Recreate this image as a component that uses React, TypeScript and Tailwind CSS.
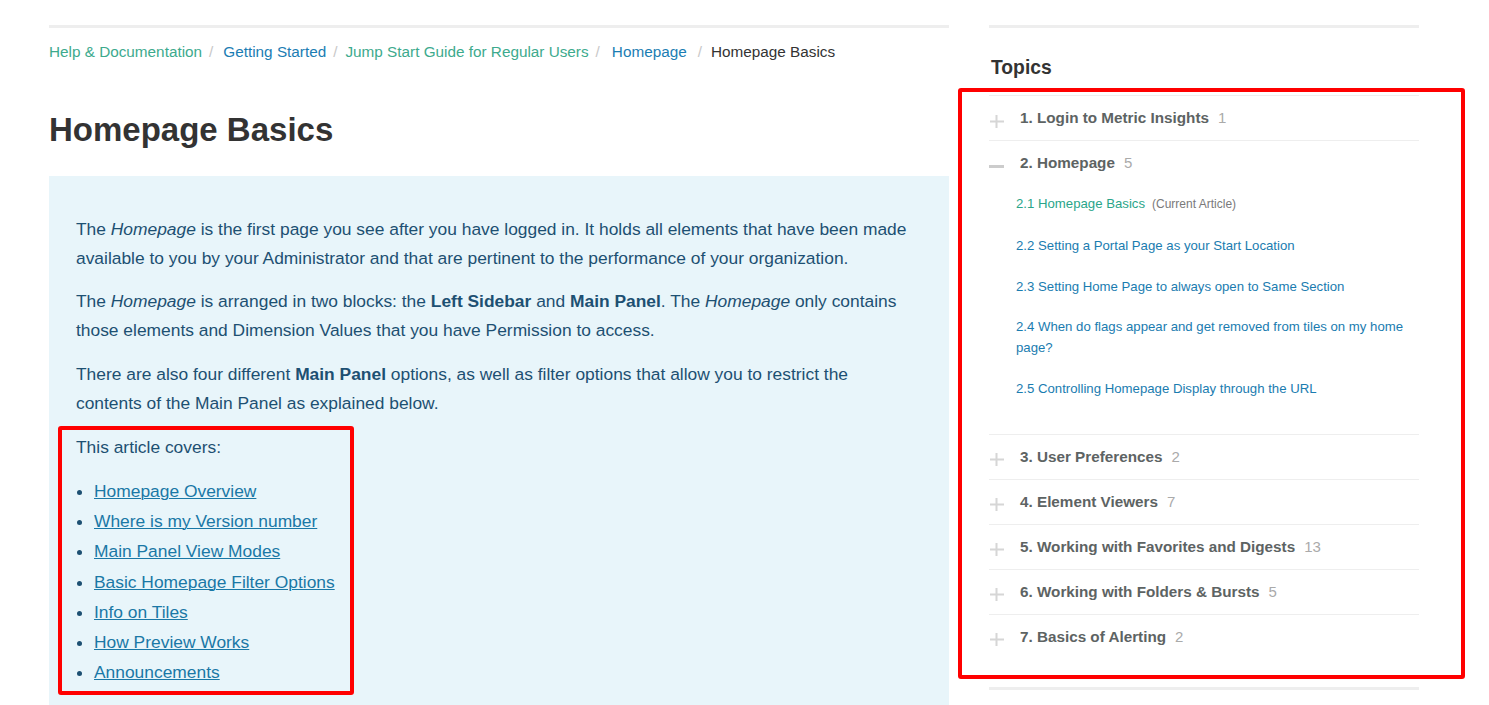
import React from "react";

function Plus() {
  return (
    <svg width="15" height="15" viewBox="0 0 15 15" className="block">
      <path d="M7.5 1v13M1 7.5h14" stroke="#d6d6d6" strokeWidth="2" fill="none" />
    </svg>
  );
}

function Minus() {
  return (
    <svg width="15" height="15" viewBox="0 0 15 15" className="block">
      <rect x="0" y="6" width="15" height="3" fill="#cccccc" />
    </svg>
  );
}

function TopicHeader({ title, count, open }: { title: string; count: number; open?: boolean }) {
  return (
    <div className="flex items-center pt-[11px] pb-[11px] leading-[22px]">
      <span className="mt-[6px] w-[31px] shrink-0">{open ? <Minus /> : <Plus />}</span>
      <span className="text-[15.25px] font-bold text-[#5d6363]">{title}</span>
      <span className="ml-[9px] text-[15px] text-[#aaaaaa]">{count}</span>
    </div>
  );
}

const topicsAfter = [
  { title: "3. User Preferences", count: 2 },
  { title: "4. Element Viewers", count: 7 },
  { title: "5. Working with Favorites and Digests", count: 13 },
  { title: "6. Working with Folders & Bursts", count: 5 },
  { title: "7. Basics of Alerting", count: 2 },
];

const coverLinks = [
  "Homepage Overview",
  "Where is my Version number",
  "Main Panel View Modes",
  "Basic Homepage Filter Options",
  "Info on Tiles",
  "How Preview Works",
  "Announcements",
];

const subItems = [
  "2.2 Setting a Portal Page as your Start Location",
  "2.3 Setting Home Page to always open to Same Section",
  "2.4 When do flags appear and get removed from tiles on my home page?",
  "2.5 Controlling Homepage Display through the URL",
];

export default function App() {
  return (
    <div className="min-h-screen bg-white font-['Liberation_Sans',Arial,sans-serif]">
      <div className="flex gap-[40px] pl-[49px] pt-[25px]">
        <main className="w-[900px] shrink-0">
          <div className="h-[3px] bg-[#eeeeee]" />
          <nav className="mt-[13px] flex whitespace-nowrap text-[15.3px] leading-[21px]">
            <a className="text-[#3daa8d]">Help &amp; Documentation</a>
            <span className="ml-[7px] mr-[10px] text-[#c8c8c8]">/</span>
            <a className="text-[#1b7db3]">Getting Started</a>
            <span className="ml-[7px] mr-[8px] text-[#c8c8c8]">/</span>
            <a className="text-[#3daa8d]">Jump Start Guide for Regular Users</a>
            <span className="ml-[7px] mr-[12px] text-[#c8c8c8]">/</span>
            <a className="text-[#1b7db3]">Homepage</a>
            <span className="ml-[11px] mr-[9px] text-[#c8c8c8]">/</span>
            <span className="text-[#333333]">Homepage Basics</span>
          </nav>
          <h1 className="mt-[48px] text-[33px] font-bold leading-[40px] text-[#333333]">Homepage Basics</h1>
          <div className="mt-[26px] bg-[#e8f5fa] pl-[27px] pr-[32px] pt-[39px] pb-[40px] text-[17.4px] leading-[29px] text-[#1d5072]">
            <p className="mb-[14px]">
              The <em>Homepage</em> is the first page you see after you have logged in. It holds all elements that have been made
              available to you by your Administrator and that are pertinent to the performance of your organization.
            </p>
            <p className="mb-[15px]">
              The <em>Homepage</em> is arranged in two blocks: the <strong>Left Sidebar</strong> and <strong>Main Panel</strong>. The{" "}
              <em>Homepage</em> only contains those elements and Dimension Values that you have Permission to access.
            </p>
            <p className="mb-[8px]">
              There are also four different <strong>Main Panel</strong> options, as well as filter options that allow you to restrict the
              contents of the Main Panel as explained below.
            </p>
            <div className="-ml-[18px] w-[296px] rounded-[3px] border-4 border-[#ff0000] pl-[14px] pt-[3px] pb-[4px]">
              <p className="mb-[14px]">This article covers:</p>
              <ul className="list-disc pl-[18px]">
                {coverLinks.map((l) => (
                  <li key={l} className="leading-[30.2px]">
                    <a className="text-[#1a78a6] underline decoration-1">{l}</a>
                  </li>
                ))}
              </ul>
            </div>
          </div>
        </main>

        <aside className="w-[430px] shrink-0">
          <div className="h-[3px] bg-[#eeeeee]" />
          <h2 className="mt-[28px] pl-[2px] text-[19.3px] font-bold leading-[24px] text-[#333333]">Topics</h2>
          <div className="mt-[8px] -ml-[31px] w-[507px] rounded-[3px] border-4 border-[#ff0000] pl-[27px] pr-[42px] pt-[3px] pb-[16px]">
            <div className="border-t border-[#eeeeee]">
              <TopicHeader title="1. Login to Metric Insights" count={1} />
            </div>
            <div className="border-t border-[#eeeeee]">
              <TopicHeader title="2. Homepage" count={5} open />
              <ul className="pl-[27px] pr-[10px] pt-[8px] pb-[15px] text-[13.2px] leading-[21px]">
                <li className="mb-[20px] text-[#2aa58a]">
                  2.1 Homepage Basics
                  <span className="ml-[7px] text-[12px] text-[#7a7a7a]">(Current Article)</span>
                </li>
                {subItems.map((s) => (
                  <li key={s} className="mb-[19.7px] text-[#1a7cb0]">
                    {s}
                  </li>
                ))}
              </ul>
            </div>
            {topicsAfter.map((t) => (
              <div key={t.title} className="border-t border-[#eeeeee]">
                <TopicHeader title={t.title} count={t.count} />
              </div>
            ))}
          </div>
          <div className="mt-[8px] h-[3px] bg-[#eeeeee]" />
        </aside>
      </div>
    </div>
  );
}
